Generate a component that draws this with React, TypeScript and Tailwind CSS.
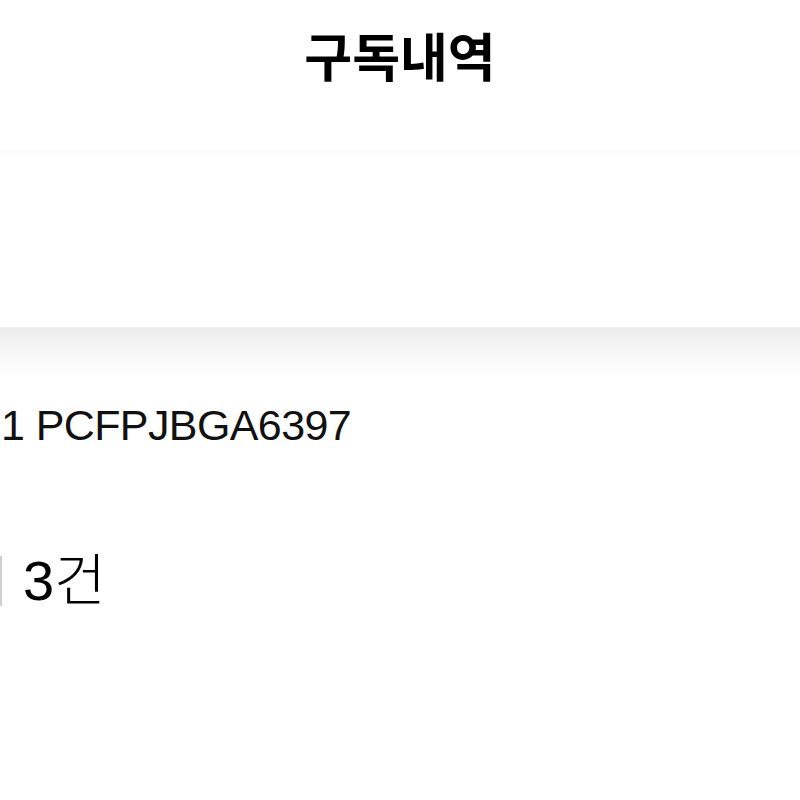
export default function App() {
  return (
    <div className="w-[800px] h-[800px] overflow-hidden bg-white text-black font-['Liberation_Sans','Noto_Sans_CJK_KR',sans-serif]">
      <header className="h-[150px] pt-[29px] text-center">
        <h1 className="text-[52px] font-bold leading-none font-['Noto_Sans_CJK_KR',sans-serif]">구독내역</h1>
      </header>
      <div className="h-[8px] bg-gradient-to-b from-[#fbfbfb] to-white" />
      <div className="h-[169px]" />
      <div className="h-[48px] bg-gradient-to-b from-[#ededed] to-white" />

      <div className="ml-[1px] mt-[29px] text-[43px] leading-none tracking-[-0.6px] text-[#111]">
        1 PCFPJBGA6397
      </div>

      <div className="mt-[106px] flex items-center">
        <span className="w-[2px] h-[50px] bg-[#cfcfcf]" />
        <span className="ml-[21px] text-[56px] leading-none font-light">3건</span>
      </div>
    </div>
  );
}
